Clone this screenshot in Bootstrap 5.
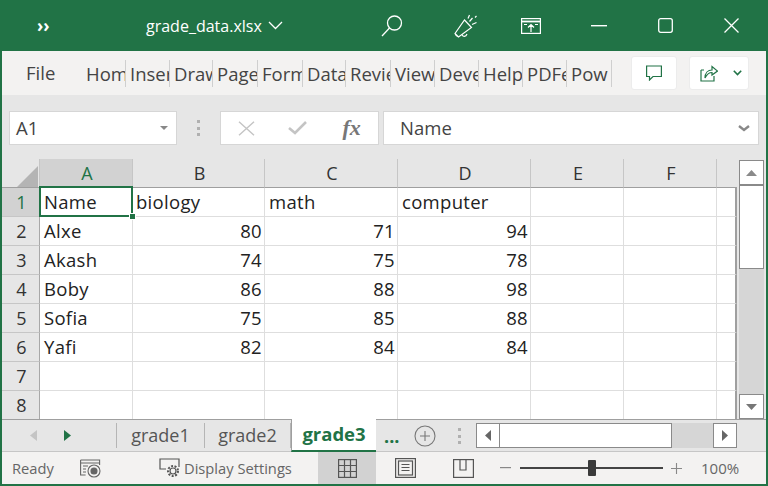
<!DOCTYPE html>
<html lang="en"><head><meta charset="utf-8"><title>grade_data.xlsx</title>
<link href="https://cdn.jsdelivr.net/npm/bootstrap@5.3.0/dist/css/bootstrap.min.css" rel="stylesheet">
<style>
html,body{margin:0;height:486px;overflow:hidden}
body{font-family:"Open Sans","Noto Sans",sans-serif;background:#217346;width:768px}
svg{display:block;flex:none}
.xl-win{width:768px;height:486px;padding:0 2px 2px 2px;display:flex;flex-direction:column;overflow:hidden}
.xl-title{height:51px;margin:0 -2px;padding:0;color:#fff;flex:none}
.xl-more{width:27px;margin-left:37px;font-size:17px;line-height:1}
.xl-docname{margin-left:82px;width:146px;font-size:16px;gap:6px}
.xl-search{margin-left:89px}
.xl-cheer{margin-left:51px}
.xl-store{margin-left:43px}
.xl-min{margin-left:50px}
.xl-max{margin-left:51px}
.xl-close{margin-left:51px}
.xl-ribbon{height:44px;background:#f3f2f1;color:#444;flex:none}
.xl-file{width:81px;padding-left:24px;font-size:18.5px}
.xl-rtab{height:27px;font-size:18.5px;overflow:hidden;white-space:nowrap;border-right:1px solid #cfcfcf;padding-left:4px;line-height:27px;flex:none}
.xl-rtab:nth-child(2){padding-left:3px}
.xl-w43{width:43px}.xl-w44{width:44px}.xl-w45{width:45px}
.xl-rbtn{background:#fff;height:34px;border-radius:3px;border:1px solid #ececec;flex:none}
.xl-comment{width:46px;margin-left:19px}
.xl-share{width:60px;margin-left:12px;padding-left:10px;gap:15px}
.xl-fbar{height:64px;background:#e6e6e6;flex:none;padding:16px 7px 14px 7px;color:#444;font-size:18.5px}
.xl-box{background:#fff;border:1px solid #d6d6d6;height:34px}
.xl-namebox{width:168px;padding-left:6px}
.xl-fx{width:160px;margin-left:20px}
.xl-formula{width:377px;margin-left:4px;padding-left:16px}
.xl-dots{width:3px;height:16px;border-left:3px dotted #b0b0b0}
.xl-dots-a{margin-left:20px}
.xl-x{margin-left:17px}
.xl-chk{margin-left:33px}
.xl-fxt{margin-left:36px;font-family:"Liberation Serif",serif;font-size:22px;color:#777;line-height:1}
.xl-sheet{height:260px;flex:none;background:#e6e6e6}
.xl-table{border-collapse:separate;border-spacing:0;table-layout:fixed;width:735px;font-size:18.5px;letter-spacing:.3px;color:#222;flex:none}
.xl-table col:nth-child(1){width:38px}
.xl-table col:nth-child(2){width:93px}
.xl-table col:nth-child(3){width:132px}
.xl-table col:nth-child(4){width:133px}
.xl-table col:nth-child(5){width:133px}
.xl-table col:nth-child(6){width:93px}
.xl-table col:nth-child(7){width:93px}
.xl-table col:nth-child(8){width:20px}
.xl-table th{background:#e6e6e6;font-weight:400;text-align:center;height:28px;border-right:1px solid #c6c6c6;border-bottom:1px solid #9f9f9f;padding:0 0 0 2px;color:#333;font-size:18px;letter-spacing:0}
.xl-table td{height:29px;padding:0 2px 0 3px;background:#fff;border-right:1px solid #dedede;border-bottom:1px solid #dedede;line-height:28px;white-space:nowrap;overflow:visible}
.xl-table td:nth-child(2),.xl-table td:nth-child(4),.xl-table td:nth-child(5){padding-left:4px}
.xl-table td:last-child{border-right:2px solid #9f9f9f}
.xl-table th:last-child{border-right:0}
.xl-table tbody th{height:29px;border-right:1px solid #a8a8a8;border-bottom:1px solid #c6c6c6}
.xl-table th.xl-on{background:#d2d2d2;color:#217346}
.xl-tri{margin:7px 0 0 13px}
.xl-num{text-align:right}
.xl-active{position:relative}
.xl-sel{position:absolute;left:-1px;top:-2px;width:94px;height:31px;border:2px solid #217346;pointer-events:none}
.xl-sel::after{content:"";position:absolute;right:-5px;bottom:-5px;width:7px;height:7px;background:#217346;border:1px solid #fff}
.xl-vs{width:25px;margin:0 2px;flex:none;padding-top:1px}
.xl-sbtn{background:#fff;border:1px solid #8a8a8a;flex:none}
.xl-vbtn{height:25px}
.xl-hbtn{width:24px}
.xl-vthumb{background:#fff;border:1px solid #8a8a8a;height:84px}
.xl-vtrack{flex:1;background:#d6d6d6}
.xl-tabs{height:33px;background:#e6e6e6;flex:none;border-bottom:1px solid #c6c6c6;border-top:1px solid #9f9f9f;color:#555;font-size:18px}
.xl-tl{margin-left:28px}.xl-tr{margin-left:27px}
.xl-tab{width:86px;height:25px;border-right:1px solid #b5b5b5;line-height:24px;text-align:center;flex:none}
.xl-tab-first{width:89px;margin-left:45px;border-left:1px solid #b5b5b5}
.xl-tab-on{height:33px;width:85px;background:#fff;border-bottom:2px solid #217346;border-left:1px solid #9f9f9f;color:#217346;font-weight:700;font-size:18.5px;text-align:center;line-height:30px;flex:none;margin-top:-1px}
.xl-tmore{color:#217346;margin-left:8px;line-height:1;width:24px}
.xl-plus{margin-left:6px}
.xl-dots-b{margin-left:22px}
.xl-hs{margin-left:15px;width:261px;height:25px;flex:none}
.xl-hthumb{width:172px;background:#fff;border:1px solid #8a8a8a;border-left:0;height:25px}
.xl-htrack{flex:1;background:#d6d6d6;height:25px}
.xl-status{flex:1;background:#f3f2f1;color:#666;font-size:14.7px}
.xl-ready{margin-left:10px;width:68px}
.xl-disp{margin-left:58px}
.xl-dispt{margin-left:4px;width:134px}
.xl-normal{width:58px;height:100%;background:#d2d2d2;flex:none}
.xl-pl{margin-left:19px}
.xl-pb{margin-left:37px}
.xl-zm{margin-left:26px}
.xl-slider{width:143px;height:2px;background:#444;position:relative;flex:none;margin-left:9px}
.xl-knob{position:absolute;left:68px;top:-7px;width:8px;height:16px;background:#3a3a3a;border-radius:1px}
.xl-zp{margin-left:8px}
.xl-pct{margin-left:19px;font-size:15px}
</style></head><body>
<div class="xl-win">
 <div class="xl-title d-flex align-items-center">
  <div class="xl-more fw-bold">››</div>
  <div class="xl-docname d-flex align-items-center"><span>grade_data.xlsx</span>
   <svg width="15" height="9" viewBox="0 0 15 9" fill="none" stroke="#fff" stroke-width="1.3"><path d="M1 1l6.5 6.500L14 1"/></svg></div>
  <div class="xl-search"><svg width="22" height="22" viewBox="0 0 22 22" fill="none" stroke="#fff" stroke-width="1.3"><circle cx="13.500" cy="8" r="7"/><path d="M8.500 13L1 21"/></svg></div>
  <svg class="xl-cheer" width="24" height="24" viewBox="0 0 24 24" fill="none" stroke="#fff" stroke-width="1.2"><path d="M1 19.500L10.500 6l7 7.500L4.500 23zM4.500 23c-1.200-.5-3-2-3.500-3.500M8 20.500c.5 2.500 4 2.500 5-.5M15.500 7.500l3-3.500M18 10.500l4.500-2M14 4.500L15.500 1M21 3.500L22.500 2"/></svg>
  <svg class="xl-store" width="20" height="16" viewBox="0 0 20 16" fill="none" stroke="#fff" stroke-width="1.2"><rect x=".6" y=".6" width="18.800" height="14.800"/><path d="M1 3.500h18" stroke-width="1.800"/><path d="M10 14V7M7 9.500l3-3 3 3M3 6.500h3M14 6.500h3"/></svg>
  <svg class="xl-min" width="16" height="2" viewBox="0 0 16 2"><rect width="16" height="1.400" fill="#fff"/></svg>
  <svg class="xl-max" width="15" height="15" viewBox="0 0 15 15" fill="none" stroke="#fff" stroke-width="1.3"><rect x=".7" y=".7" width="13.600" height="13.600" rx="2"/></svg>
  <svg class="xl-close" width="15" height="15" viewBox="0 0 15 15" fill="none" stroke="#fff" stroke-width="1.3"><path d="M.5.500l14 14M14.500.500l-14 14"/></svg>
 </div>
 <div class="xl-ribbon d-flex align-items-center">
  <div class="xl-file">File</div>
  <div class="xl-rtab xl-w43">Home</div>
  <div class="xl-rtab xl-w44">Insert</div>
  <div class="xl-rtab xl-w43">Draw</div>
  <div class="xl-rtab xl-w45">Page</div>
  <div class="xl-rtab xl-w45">Form</div>
  <div class="xl-rtab xl-w43">Data</div>
  <div class="xl-rtab xl-w45">Review</div>
  <div class="xl-rtab xl-w44">View</div>
  <div class="xl-rtab xl-w44">Developer</div>
  <div class="xl-rtab xl-w44">Help</div>
  <div class="xl-rtab xl-w44">PDFe</div>
  <div class="xl-rtab xl-w45">Pow</div>
  <div class="xl-rbtn xl-comment d-flex align-items-center justify-content-center">
   <svg width="16" height="16" viewBox="0 0 16 16" fill="none" stroke="#217346" stroke-width="1.2"><path d="M.6 1h14.800v10.500H7L3.500 15v-3.500H.6z"/></svg></div>
  <div class="xl-rbtn xl-share d-flex align-items-center">
   <svg width="18" height="18" viewBox="0 0 18 18" fill="none" stroke="#217346" stroke-width="1.2"><path d="M1 6v11h13v-5M1 6h3M5 14c0-5 3-8 7-8V2.500L17.500 7 12 11V8.500c-3 0-5 1.500-7 5.500z"/></svg>
   <svg width="9" height="6" viewBox="0 0 9 6" fill="none" stroke="#217346" stroke-width="1.6"><path d="M.8.800l3.700 3.700L8.200.800"/></svg></div>
 </div>
 <div class="xl-fbar d-flex align-items-center">
  <div class="xl-box xl-namebox d-flex align-items-center justify-content-between"><span>A1</span>
   <svg class="me-2" width="8" height="4" viewBox="0 0 8 4"><path d="M0 0h8L4 4z" fill="#888"/></svg></div>
  <div class="xl-dots xl-dots-a"></div>
  <div class="xl-box xl-fx d-flex align-items-center">
   <svg class="xl-x" width="17" height="15" viewBox="0 0 17 15" fill="none" stroke="#c4c4c4" stroke-width="1.4"><path d="M1 .700l15 13.600M16 .700L1 14.300"/></svg>
   <svg class="xl-chk" width="19" height="14" viewBox="0 0 19 14" fill="none" stroke="#c4c4c4" stroke-width="2.6"><path d="M1 7l6 5L18 1"/></svg>
   <i class="xl-fxt fw-bold">fx</i></div>
  <div class="xl-box xl-formula d-flex align-items-center justify-content-between"><span>Name</span>
   <svg class="me-2" width="12" height="7" viewBox="0 0 12 7" fill="none" stroke="#888" stroke-width="2.4"><path d="M1 1l5 4 5-4"/></svg></div>
 </div>
 <div class="xl-sheet d-flex">
  <table class="xl-table">
   <colgroup><col><col><col><col><col><col><col><col></colgroup>
   <thead><tr>
    <th><svg class="xl-tri" width="21" height="21" viewBox="0 0 21 21"><path d="M21 0v21H0z" fill="#b4b4b4"/></svg></th>
    <th class="xl-on">A</th><th>B</th><th>C</th><th>D</th><th>E</th><th>F</th><th></th></tr></thead>
   <tbody>
    <tr><th class="xl-on">1</th><td class="xl-active">Name<span class="xl-sel"></span></td><td>biology</td><td>math</td><td>computer</td><td></td><td></td><td></td></tr>
    <tr><th>2</th><td>Alxe</td><td class="xl-num">80</td><td class="xl-num">71</td><td class="xl-num">94</td><td></td><td></td><td></td></tr>
    <tr><th>3</th><td>Akash</td><td class="xl-num">74</td><td class="xl-num">75</td><td class="xl-num">78</td><td></td><td></td><td></td></tr>
    <tr><th>4</th><td>Boby</td><td class="xl-num">86</td><td class="xl-num">88</td><td class="xl-num">98</td><td></td><td></td><td></td></tr>
    <tr><th>5</th><td>Sofia</td><td class="xl-num">75</td><td class="xl-num">85</td><td class="xl-num">88</td><td></td><td></td><td></td></tr>
    <tr><th>6</th><td>Yafi</td><td class="xl-num">82</td><td class="xl-num">84</td><td class="xl-num">84</td><td></td><td></td><td></td></tr>
    <tr><th>7</th><td></td><td></td><td></td><td></td><td></td><td></td><td></td></tr>
    <tr><th>8</th><td></td><td></td><td></td><td></td><td></td><td></td><td></td></tr>
   </tbody>
  </table>
  <div class="xl-vs d-flex flex-column">
   <div class="xl-sbtn xl-vbtn d-flex align-items-center justify-content-center"><svg width="11" height="6" viewBox="0 0 11 6"><path d="M0 6L5.500 0 11 6z" fill="#8a8a8a"/></svg></div>
   <div class="xl-vthumb"></div><div class="xl-vtrack"></div>
   <div class="xl-sbtn xl-vbtn d-flex align-items-center justify-content-center"><svg width="11" height="6" viewBox="0 0 11 6"><path d="M0 0h11L5.500 6z" fill="#777"/></svg></div>
  </div>
 </div>
 <div class="xl-tabs d-flex align-items-center">
  <svg class="xl-tl" width="7" height="11" viewBox="0 0 7 11"><path d="M7 0v11L0 5.500z" fill="#c4c4c4"/></svg>
  <svg class="xl-tr" width="7" height="11" viewBox="0 0 7 11"><path d="M0 0v11l7-5.500z" fill="#217346"/></svg>
  <div class="xl-tab xl-tab-first">grade1</div>
  <div class="xl-tab">grade2</div>
  <div class="xl-tab-on">grade3</div>
  <div class="xl-tmore fw-bold">...</div>
  <svg class="xl-plus" width="22" height="22" viewBox="0 0 22 22" fill="none" stroke="#777" stroke-width="1.1"><circle cx="11" cy="11" r="10"/><path d="M11 6v10M6 11h10"/></svg>
  <div class="xl-dots xl-dots-b"></div>
  <div class="xl-hs d-flex">
   <div class="xl-sbtn xl-hbtn d-flex align-items-center justify-content-center"><svg width="6" height="11" viewBox="0 0 6 11"><path d="M6 0v11L0 5.500z" fill="#666"/></svg></div>
   <div class="xl-hthumb"></div><div class="xl-htrack"></div>
   <div class="xl-sbtn xl-hbtn d-flex align-items-center justify-content-center"><svg width="6" height="11" viewBox="0 0 6 11"><path d="M0 0v11l6-5.500z" fill="#666"/></svg></div>
  </div>
 </div>
 <div class="xl-status d-flex align-items-center">
  <div class="xl-ready">Ready</div>
  <svg width="21" height="19" viewBox="0 0 21 19" fill="none" stroke="#666" stroke-width="1.1"><path d="M.6 1h19v5M.6 1v15h5M.6 4h19"/><path d="M3 7h5M3 10h3M3 13h3"/><circle cx="14" cy="12" r="6"/><circle cx="14" cy="12" r="3" fill="#666"/></svg>
  <svg class="xl-disp" width="21" height="20" viewBox="0 0 21 20" fill="none" stroke="#555" stroke-width="1.2"><path d="M7 11H1V1h19v8"/><circle cx="14" cy="13" r="3"/><circle cx="14" cy="13" r="5" stroke-dasharray="2 1.500" stroke-width="2"/></svg>
  <div class="xl-dispt">Display Settings</div>
  <div class="xl-normal d-flex align-items-center justify-content-center"><svg width="19" height="19" viewBox="0 0 19 19" fill="none" stroke="#555" stroke-width="1.2"><rect x=".6" y=".6" width="17.800" height="17.800"/><path d="M6.500 1v17M12.500 1v17M1 6.500h17M1 12.500h17"/></svg></div>
  <svg class="xl-pl" width="21" height="20" viewBox="0 0 21 20" fill="none" stroke="#555" stroke-width="1.2"><rect x=".6" y=".6" width="19.800" height="18.800"/><rect x="3.500" y="3" width="14" height="14"/><path d="M6.500 6.500h8M6.500 9.500h8M6.500 12.500h8"/></svg>
  <svg class="xl-pb" width="21" height="19" viewBox="0 0 21 19" fill="none" stroke="#555" stroke-width="1.2"><rect x=".6" y=".6" width="19.800" height="17.800"/><path d="M7 1v10h6V1"/></svg>
  <svg class="xl-zm" width="11" height="2" viewBox="0 0 11 2"><rect width="11" height="1.200" fill="#888"/></svg>
  <div class="xl-slider"><div class="xl-knob"></div></div>
  <svg class="xl-zp" width="11" height="11" viewBox="0 0 11 11" fill="none" stroke="#888" stroke-width="1.1"><path d="M5.500 0v11M0 5.500h11"/></svg>
  <div class="xl-pct">100%</div>
 </div>
</div>
</body></html>
